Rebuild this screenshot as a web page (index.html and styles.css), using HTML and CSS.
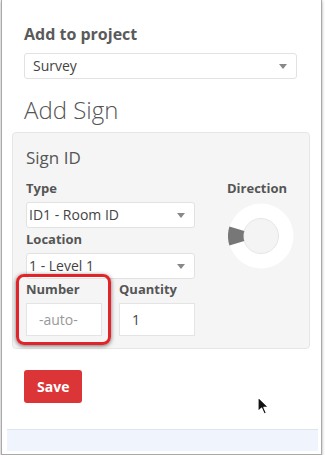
FILE: index.html
```html
<!DOCTYPE html>
<html lang="en">
<head>
    <meta charset="UTF-8">
    <meta name="viewport" content="width=device-width, initial-scale=1.0">
    <title>Add Sign</title>
    <link rel="stylesheet" href="styles.css">
</head>
<body>
    <div class="window">
        <div class="page-head">
            <h4>Add to project</h4>
            <div class="select wide">
                <span>Survey</span>
                <svg class="caret" width="8" height="5" viewBox="0 0 8 5"><path d="M0 0H8L4 5Z"/></svg>
            </div>
            <h2>Add Sign</h2>
        </div>

        <div class="panel">
            <h3>Sign ID</h3>
            <div class="panel-grid">
                <div class="left-col">
                    <label>Type</label>
                    <div class="select">
                        <span>ID1 - Room ID</span>
                        <svg class="caret" width="8" height="5" viewBox="0 0 8 5"><path d="M0 0H8L4 5Z"/></svg>
                    </div>
                    <label class="next">Location</label>
                    <div class="select">
                        <span>1 - Level 1</span>
                        <svg class="caret" width="8" height="5" viewBox="0 0 8 5"><path d="M0 0H8L4 5Z"/></svg>
                    </div>
                    <div class="pair">
                        <div class="field number">
                            <label>Number</label>
                            <input type="text" placeholder="-auto-">
                            <div class="callout"></div>
                        </div>
                        <div class="field">
                            <label>Quantity</label>
                            <input type="text" value="1">
                        </div>
                    </div>
                </div>
                <div class="right-col">
                    <label>Direction</label>
                    <!-- dial: white ring, grey wedge points left -->
                    <svg class="dial" width="66" height="66" viewBox="0 0 66 66">
                        <circle cx="33" cy="33" r="32.5" fill="#fff"/>
                        <circle cx="33" cy="33" r="17.5" fill="#f4f4f4" stroke="#e6e6e6" stroke-width="1"/>
                        <path d="M1.4 23.5 A32.5 32.5 0 0 0 1.4 42.5 L16.3 38.1 A17.5 17.5 0 0 1 16.3 27.9 Z" fill="#777"/>
                    </svg>
                </div>
            </div>
        </div>

        <div class="actions">
            <button class="btn-save">Save</button>
        </div>

        <div class="footer"></div>

        <svg class="pointer" width="14" height="20" viewBox="0 0 14 20">
            <path d="M1 1 L1 15.5 L4.6 12.2 L7.2 18 L9.4 17 L6.9 11.4 L11.6 11.4 Z" fill="#111" stroke="#fff" stroke-width="1.2" stroke-linejoin="round"/>
        </svg>
    </div>
</body>
</html>
```

FILE: styles.css
```css
body {
    margin: 0;
    background: #fff;
    font-family: 'Open Sans', 'Liberation Sans', sans-serif;
    color: #555;
}

.window {
    position: relative;
    margin: 0 3px 0 1px;
    height: 455px;
    box-sizing: border-box;
    padding-top: 24px;
    border: 1px solid #a9a9a9;
    border-top: none;
    box-shadow: 0 1px 3px rgba(0, 0, 0, 0.35);
    background: #fff;
}

.page-head {
    padding: 0 24px 0 22px;
}

h4 {
    margin: 0 0 9px;
    font-size: 16px;
    line-height: 20px;
    font-weight: 700;
    color: #5a5a5a;
}

h2 {
    margin: 16px 0 7px;
    font-size: 24px;
    line-height: 30px;
    font-weight: 300;
    color: #555;
}

.select {
    position: relative;
    height: 26px;
    box-sizing: border-box;
    border: 1px solid #e2e2e2;
    border-radius: 3px;
    background: #fff;
    font-size: 14px;
    line-height: 24px;
    padding-left: 2px;
    color: #444;
}

.select.wide {
    padding-left: 8px;
}

.caret {
    position: absolute;
    right: 9px;
    top: 10px;
    fill: #888;
}

.panel {
    margin: 0 11px 0 10px;
    padding: 14px 13px 12px;
    background: #f5f5f5;
    border: 1px solid #e6e6e6;
    border-radius: 4px;
}

h3 {
    margin: 0 0 10px;
    font-size: 17px;
    line-height: 22px;
    font-weight: 400;
    color: #555;
}

.panel-grid {
    display: grid;
    grid-template-columns: 169px 1fr;
    column-gap: 32px;
}

label {
    display: block;
    margin-bottom: 5px;
    font-size: 13px;
    line-height: 18px;
    font-weight: 700;
    color: #555;
}

label.next {
    margin-top: 2px;
}

.pair {
    display: grid;
    grid-template-columns: 76px 76px;
    column-gap: 17px;
    margin-top: 1px;
}

.field {
    position: relative;
}

.field input {
    display: block;
    width: 100%;
    height: 33px;
    box-sizing: border-box;
    padding: 0 12px;
    border: 1px solid #e4e4e4;
    border-radius: 0;
    background: #fff;
    font-family: 'Open Sans', 'Liberation Sans', sans-serif;
    font-size: 14px;
    color: #444;
    outline: none;
}

.field input::placeholder {
    color: #999;
}

/* red annotation round the Number field */
.callout {
    position: absolute;
    left: -10px;
    right: -9px;
    top: -6px;
    bottom: -9px;
    border: 3.5px solid #e1242a;
    border-radius: 8px;
    box-shadow: 0 1px 4px rgba(0, 0, 0, 0.55);
}

.dial {
    display: block;
    margin: 6px 0 0 1px;
}

.actions {
    padding: 21px 22px 0;
}

.btn-save {
    height: 33px;
    padding: 0 13px;
    border: none;
    border-radius: 3px;
    background: #dc3538;
    color: #fff;
    font-family: 'Open Sans', 'Liberation Sans', sans-serif;
    font-size: 14px;
    font-weight: 700;
}

.footer {
    margin: 26px 3px 0 5px;
    height: 22px;
    box-sizing: border-box;
    background: #f0f4fc;
    border-top: 1px solid #dfe4ee;
}

.pointer {
    position: absolute;
    left: 255px;
    top: 396px;
}
```
